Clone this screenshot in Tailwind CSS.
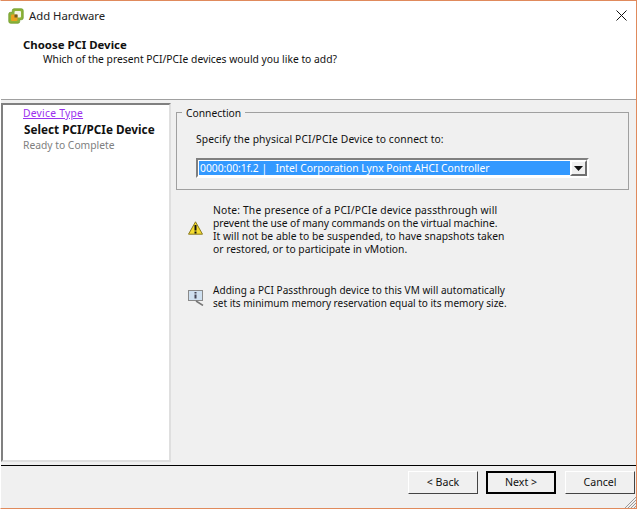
<!DOCTYPE html>
<html lang="en">
<head>
<meta charset="UTF-8">
<title>Add Hardware</title>
<script src="https://cdn.jsdelivr.net/npm/@tailwindcss/browser@4"></script>
</head>
<body class="bg-white overflow-hidden">
<div class="w-[637px] h-[509px] border-t border-b border-r border-l border-[#e08a5c] border-l-white bg-[#f0f0f0] flex flex-col relative font-['Noto_Sans',sans-serif] text-[10.3px] leading-[13px] text-[#111]">
  <!-- Title and header -->
  <div class="h-[99px] bg-white border-b border-[#a0a0a0] shrink-0">
    <div class="h-[29px] flex items-center pl-[7px] pr-[9px]">
      <svg width="16" height="16" viewBox="0 0 16 16" class="shrink-0">
        <path d="M6 .8h7.5a1.7 1.7 0 0 1 1.7 1.7V10a1.7 1.7 0 0 1-1.7 1.7h-1.8v1.8a1.7 1.7 0 0 1-1.7 1.7H2.5A1.7 1.7 0 0 1 .8 13.5V6a1.7 1.7 0 0 1 1.7-1.7h1.8V2.5A1.7 1.7 0 0 1 6 .8z" fill="#8db33a" stroke="#6d9a2a" stroke-width=".8"/>
        <rect x="6.5" y="3" width="6.5" height="6.5" rx="1" fill="#f4f6e8"/>
        <rect x="3" y="6.5" width="6.5" height="6.5" rx="1" fill="#eaa21f"/>
        <rect x="6.5" y="6.5" width="3" height="3" fill="#6e5a24"/>
      </svg>
      <span class="ml-[5px] text-[11.3px] text-[#222]">Add Hardware</span>
      <svg width="11" height="11" viewBox="0 0 11 11" class="ml-auto"><path d="M.5.5l10 10M10.5.5l-10 10" stroke="#111" stroke-width="1" fill="none"/></svg>
    </div>
    <div class="pl-[22px] pt-[8px]">
      <div class="font-bold text-[11.4px]">Choose PCI Device</div>
      <div class="pl-[20px] mt-[2px]">Which of the present PCI/PCIe devices would you like to add?</div>
    </div>
  </div>
  <!-- Body -->
  <div class="h-[365px] shrink-0 flex pt-[3px]">
    <div class="w-[170px] h-[359px] bg-white border-t-2 border-l-2 border-t-[#808080] border-l-[#808080] border-r-2 border-b-2 border-r-[#dfdfdf] border-b-[#dfdfdf] pl-[20px] pt-[2px] flex flex-col gap-[3px]">
      <span class="text-[#9b30ef] underline tracking-[0.25px]">Device Type</span>
      <span class="font-bold text-[11.75px] pl-[1px]">Select PCI/PCIe Device</span>
      <span class="text-[#808080]">Ready to Complete</span>
    </div>
    <div class="pl-[5px] pt-[9px] flex-1">
      <div class="w-[453px] h-[78px] border border-[#a0a0a0] relative pl-[19px] pt-[20px]">
        <span class="absolute -top-[6px] left-[5px] px-[4px] bg-[#f0f0f0]">Connection</span>
        <div class="tracking-[0.1px]">Specify the physical PCI/PCIe Device to connect to:</div>
        <div class="mt-[12px] w-[393px] h-[20px] flex border-2 border-t-[#808080] border-l-[#808080] border-r-white border-b-white bg-white">
          <div class="flex-1 bg-[#3399ff] text-white flex items-center pl-[1px] pt-[1px] mt-[1px] ml-[1px] mb-[1px] whitespace-pre">0000:00:1f.2 |  <span class="pl-[3px]">Intel Corporation Lynx Point AHCI Controller</span></div>
          <div class="w-[17px] bg-[#f0f0f0] border-2 border-t-white border-l-white border-r-[#707070] border-b-[#707070] flex items-center justify-center">
            <svg width="9" height="5" viewBox="0 0 9 5"><path d="M0 0h9L4.5 5z" fill="#111"/></svg>
          </div>
        </div>
      </div>
      <div class="flex mt-[14px] pl-[12px]">
        <svg width="15" height="14" viewBox="0 0 15 14" class="mt-[17px] shrink-0">
          <path d="M7.5.8L14.5 13.2H.5z" fill="#f5dc2e" stroke="#8a7a20" stroke-width="1" stroke-linejoin="round"/>
          <rect x="6.5" y="4" width="2" height="5.5" fill="#111"/>
          <rect x="6.5" y="10.5" width="2" height="2" fill="#111"/>
        </svg>
        <div class="pl-[10px] whitespace-nowrap">
          <div class="tracking-[0.16px]">Note: The presence of a PCI/PCIe device passthrough will</div>
          <div class="tracking-[-0.07px]">prevent the use of many commands on the virtual machine.</div>
          <div class="tracking-[0.03px]">It will not be able to be suspended, to have snapshots taken</div>
          <div>or restored, or to participate in vMotion.</div>
        </div>
      </div>
      <div class="flex mt-[28px] pl-[12px]">
        <svg width="16" height="16" viewBox="0 0 16 16" class="mt-[6px] shrink-0">
          <rect x=".5" y=".5" width="14" height="10" fill="#cfe0f0" stroke="#8a8a8a"/>
          <rect x="6.5" y="2" width="2" height="1.5" fill="#445"/>
          <rect x="6.5" y="4.5" width="2" height="4" fill="#445"/>
          <path d="M8 11l7 4.5" stroke="#777" stroke-width="1.5"/>
        </svg>
        <div class="pl-[9px] whitespace-nowrap text-[10px]"><div class="tracking-[0.06px]">Adding a PCI Passthrough device to this VM will automatically</div><div>set its minimum memory reservation equal to its memory size.</div></div>
      </div>
    </div>
  </div>
  <!-- Footer -->
  <div class="border-t border-black flex-1 flex justify-end pt-[5px] pr-[1px] text-[10.6px]">
    <button class="w-[70px] h-[23px] bg-[#f0f0f0] border border-t-white border-l-white border-r-[#444] border-b-[#444]">&lt; Back</button>
    <button class="ml-[8px] w-[70px] h-[23px] bg-[#f0f0f0] border-2 border-black">Next &gt;</button>
    <button class="ml-[9px] w-[70px] h-[23px] bg-[#f0f0f0] border border-t-white border-l-white border-r-[#444] border-b-[#444]">Cancel</button>
  </div>
  <svg width="12" height="12" viewBox="0 0 12 12" class="absolute right-0 bottom-0"><path d="M12 1L1 12M12 4L4 12M12 7L7 12M12 10L10 12" stroke="#999" fill="none"/></svg>
</div>
</body>
</html>
